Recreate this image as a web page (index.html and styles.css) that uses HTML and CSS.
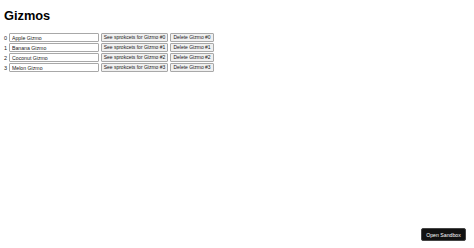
FILE: index.html
```html
<!DOCTYPE html>
<html>
<head>
<meta charset="utf-8">
<link rel="stylesheet" href="styles.css">
</head>
<body>
<main class="page">
  <h1 class="title">Gizmos</h1>
  <ul class="list">
    <li class="row"><span class="idx">0</span><input class="name" value="Apple Gizmo"><button class="btn btn-see">See sprokcets for Gizmo #0</button><button class="btn btn-del">Delete Gizmo #0</button></li>
    <li class="row"><span class="idx">1</span><input class="name" value="Banana Gizmo"><button class="btn btn-see">See sprokcets for Gizmo #1</button><button class="btn btn-del">Delete Gizmo #1</button></li>
    <li class="row"><span class="idx">2</span><input class="name" value="Coconut Gizmo"><button class="btn btn-see">See sprokcets for Gizmo #2</button><button class="btn btn-del">Delete Gizmo #2</button></li>
    <li class="row"><span class="idx">3</span><input class="name" value="Melon Gizmo"><button class="btn btn-see">See sprokcets for Gizmo #3</button><button class="btn btn-del">Delete Gizmo #3</button></li>
  </ul>
</main>
<button class="sandbox">Open Sandbox</button>
</body>
</html>
```
FILE: styles.css
```css
html, body {
  margin: 0;
  padding: 0;
  background: #ffffff;
  font-family: "Liberation Sans", Arial, sans-serif;
  color: #000;
}
.page {
  padding: 8px 4px 0 4px;
}
.title {
  margin: 0;
  font-size: 12.8px;
  line-height: 16px;
  font-weight: bold;
}
.list {
  list-style: none;
  margin: 9px 0 0 0;
  padding: 0;
  display: flex;
  flex-direction: column;
  gap: 1px;
}
.row {
  display: flex;
  align-items: center;
  gap: 2px;
  height: 9px;
  font-size: 5.2px;
}
.idx {
  width: 3px;
  font-size: 5.5px;
  text-align: center;
  color: #222;
}
.name {
  box-sizing: border-box;
  width: 90px;
  height: 9px;
  margin: 0;
  padding: 0 2px;
  font-family: inherit;
  font-size: 5.2px;
  border: 0.6px solid #a8a8a8;
  border-radius: 1px;
  background: #fff;
  color: #222;
  outline: none;
}
.btn {
  box-sizing: border-box;
  height: 9px;
  margin: 0;
  padding: 0 1px;
  font-family: inherit;
  font-size: 5px;
  line-height: 1;
  border: 0.6px solid #a8a8a8;
  border-radius: 1px;
  background: #f0f0f0;
  color: #222;
  white-space: nowrap;
  text-align: center;
}
.btn-see { width: 67px; }
.btn-del { width: 44px; }
.sandbox {
  position: fixed;
  right: 8px;
  bottom: 7px;
  box-sizing: border-box;
  width: 45px;
  height: 13px;
  margin: 0;
  padding: 0;
  font-family: inherit;
  font-size: 5.2px;
  color: #fff;
  background: #111;
  border: 0.5px solid #444;
  border-radius: 2px;
}
```
